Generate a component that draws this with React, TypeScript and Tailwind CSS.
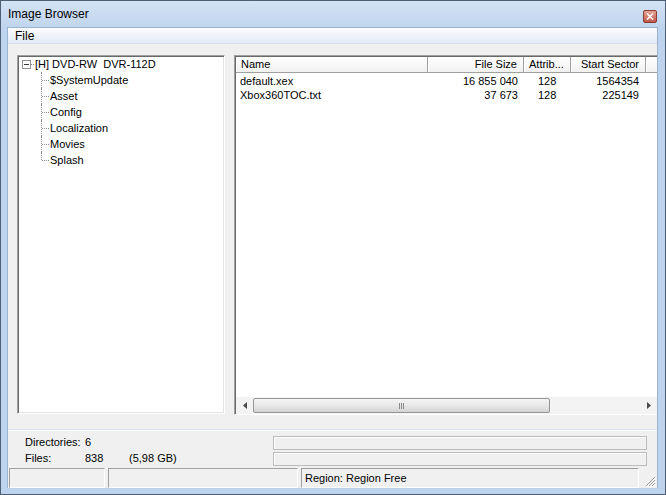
import React from "react";

const font = { fontFamily: '"Liberation Sans", Arial, sans-serif' };

const folders = ["$SystemUpdate", "Asset", "Config", "Localization", "Movies", "Splash"];

const files = [
	{ name: "default.xex", size: "16 855 040", attrib: "128", sector: "1564354" },
	{ name: "Xbox360TOC.txt", size: "37 673", attrib: "128", sector: "225149" },
];

function TreeChild({ label, last }: { label: string; last: boolean }) {
	return (
		<div className="flex h-[16px] items-center">
			<div className="relative h-[16px] w-[9px] shrink-0">
				<div
					className={`absolute left-0 top-0 w-0 border-l border-dotted border-[#8e8e8e] ${last ? "h-[8px]" : "h-[16px]"}`}
				/>
				<div className="absolute left-[1px] top-[8px] h-0 w-[7px] border-t border-dotted border-[#8e8e8e]" />
			</div>
			<span className="leading-none">{label}</span>
		</div>
	);
}

function HeaderCell({ label, width, right }: { label: string; width: string; right?: boolean }) {
	return (
		<div
			className={`flex h-full shrink-0 items-center border-r border-[#a0a0a0] bg-gradient-to-b from-[#ffffff] to-[#f1f1f1] shadow-[inset_1px_1px_0_#ffffff] ${width} ${right ? "justify-end pr-[6px]" : "pl-[5px]"}`}
		>
			{label}
		</div>
	);
}

export default function App() {
	return (
		<div
			className="flex h-[495px] w-[666px] flex-col border border-[#4f5f73] bg-[#bdd3ee] text-[11px] text-black"
			style={font}
		>
			{/* title bar */}
			<div className="flex h-[26px] shrink-0 items-center justify-between bg-gradient-to-b from-[#d4e3f5] to-[#c0d5ee] pl-[7px] pr-[8px]">
				<span className="text-[12px]">Image Browser</span>
				<div className="mt-[4px] flex h-[13px] w-[14px] items-center justify-center rounded-[2px] border border-[#8a3b32] bg-gradient-to-b from-[#e6a395] to-[#c4584a]">
					<svg width="8" height="7" viewBox="0 0 8 7">
						<path d="M1 0.5 L7 6.5 M7 0.5 L1 6.5" stroke="#ffffff" strokeWidth="1.6" />
					</svg>
				</div>
			</div>

			{/* client area */}
			<div className="ml-[6px] mr-[7px] flex h-[461px] shrink-0 flex-col border-l border-t border-r border-[#9bb3cf] bg-[#f0f0f0]">
				{/* menu */}
				<div className="flex h-[16px] shrink-0 items-center border-b border-[#d6dfec] bg-gradient-to-b from-[#fbfcfe] to-[#e3eaf6] pl-[7px] text-[12px]">
					File
				</div>

				{/* panels */}
				<div className="mt-[11px] flex h-[360px] shrink-0 pl-[9px]">
					{/* tree */}
					<div className="h-[359px] w-[208px] shrink-0 border border-b-white border-l-[#a0a0a0] border-r-white border-t-[#a0a0a0] bg-white shadow-[inset_1px_1px_0_#696969,inset_-1px_-1px_0_#e3e3e3]">
						<div className="pl-[4px]">
							<div className="flex h-[16px] items-center">
								<div className="flex h-[9px] w-[9px] items-center justify-center border border-[#919191] bg-white">
									<div className="h-px w-[5px] bg-[#3a3a3a]" />
								</div>
								<div className="h-0 w-[3px] border-t border-dotted border-[#8e8e8e]" />
								<span className="pl-[1px] leading-none">[H] DVD-RW&nbsp;&nbsp;DVR-112D</span>
							</div>
							<div className="pl-[19px]">
								{folders.map((f, i) => (
									<TreeChild key={f} label={f} last={i === folders.length - 1} />
								))}
							</div>
						</div>
					</div>

					{/* list */}
					<div className="ml-[9px] flex h-[360px] flex-1 flex-col overflow-hidden border border-r-0 border-b-white border-l-[#a0a0a0] border-t-[#a0a0a0] bg-white shadow-[inset_1px_1px_0_#696969]">
						<div className="ml-[1px] mt-[1px] flex h-[16px] shrink-0 border-b border-[#a0a0a0]">
							<HeaderCell label="Name" width="w-[192px]" />
							<HeaderCell label="File Size" width="w-[96px]" right />
							<HeaderCell label="Attrib..." width="w-[47px]" />
							<HeaderCell label="Start Sector" width="w-[75px]" right />
							<div className="h-full flex-1 bg-gradient-to-b from-[#ffffff] to-[#f1f1f1] shadow-[inset_1px_1px_0_#ffffff]" />
						</div>
						<div className="ml-[1px] flex-1 pt-[1px]">
							{files.map((f) => (
								<div key={f.name} className="flex h-[14px] items-center">
									<div className="w-[192px] shrink-0 pl-[4px]">{f.name}</div>
									<div className="w-[96px] shrink-0 pr-[6px] text-right">{f.size}</div>
									<div className="w-[47px] shrink-0 pl-[14px]">{f.attrib}</div>
									<div className="w-[75px] shrink-0 pr-[7px] text-right">{f.sector}</div>
								</div>
							))}
						</div>
						{/* horizontal scroll bar */}
						<div className="ml-[1px] flex h-[17px] shrink-0 items-center bg-[#f3f3f3]">
							<div className="flex h-full w-[17px] shrink-0 items-center justify-center">
								<svg width="4" height="7" viewBox="0 0 4 7">
									<path d="M4 0 L0 3.5 L4 7 Z" fill="#4a4a4a" />
								</svg>
							</div>
							<div className="flex h-[15px] w-[297px] shrink-0 items-center justify-center rounded-[2px] border border-[#959595] bg-gradient-to-b from-[#f4f4f4] via-[#e8e8e8] to-[#d4d4d4]">
								<div className="flex gap-[1px]">
									<div className="h-[6px] w-px bg-[#8a8a8a]" />
									<div className="h-[6px] w-px bg-[#8a8a8a]" />
									<div className="h-[6px] w-px bg-[#8a8a8a]" />
								</div>
							</div>
							<div className="flex-1" />
							<div className="flex h-full w-[17px] shrink-0 items-center justify-center">
								<svg width="4" height="7" viewBox="0 0 4 7">
									<path d="M0 0 L4 3.5 L0 7 Z" fill="#4a4a4a" />
								</svg>
							</div>
						</div>
					</div>
				</div>

				{/* separator */}
				<div className="mt-[14px] h-[2px] shrink-0 border-t border-[#dbe3ee] border-b-white border-b" />

				{/* info */}
				<div className="flex h-[37px] shrink-0 items-start pl-[17px] pr-[10px] pt-[3px]">
					<div className="w-[248px] shrink-0">
						<div className="flex h-[16px] items-center">
							<span className="w-[60px]">Directories:</span>
							<span>6</span>
						</div>
						<div className="flex h-[16px] items-center">
							<span className="w-[60px]">Files:</span>
							<span className="w-[44px]">838</span>
							<span>(5,98 GB)</span>
						</div>
					</div>
					<div className="flex flex-1 flex-col gap-[2px] pt-[2px]">
						<div className="h-[14px] border border-[#bcbcbc] bg-[#f0f0f0] shadow-[inset_1px_1px_0_#ffffff]" />
						<div className="h-[14px] border border-[#bcbcbc] bg-[#f0f0f0] shadow-[inset_1px_1px_0_#ffffff]" />
					</div>
				</div>

				{/* status bar */}
				<div className="flex h-[21px] shrink-0 items-stretch gap-[3px] pb-[1px] pl-[1px]">
					<div className="w-[96px] shrink-0 border border-b-white border-l-[#a0a0a0] border-r-white border-t-[#a0a0a0]" />
					<div className="w-[190px] shrink-0 border border-b-white border-l-[#a0a0a0] border-r-white border-t-[#a0a0a0]" />
					<div className="flex w-[338px] shrink-0 items-center border border-b-white border-l-[#a0a0a0] border-r-white border-t-[#a0a0a0] pl-[3px]">
						Region: Region Free
					</div>
					<div className="flex flex-1 items-end justify-end pb-[1px] pr-[1px]">
						<svg width="12" height="12" viewBox="0 0 12 12">
							<path d="M11 2 L2 11 M11 5 L5 11 M11 8 L8 11" stroke="#a0a0a0" strokeWidth="1" />
							<path d="M12 3 L3 12 M12 6 L6 12 M12 9 L9 12" stroke="#ffffff" strokeWidth="1" />
						</svg>
					</div>
				</div>
			</div>
		</div>
	);
}
